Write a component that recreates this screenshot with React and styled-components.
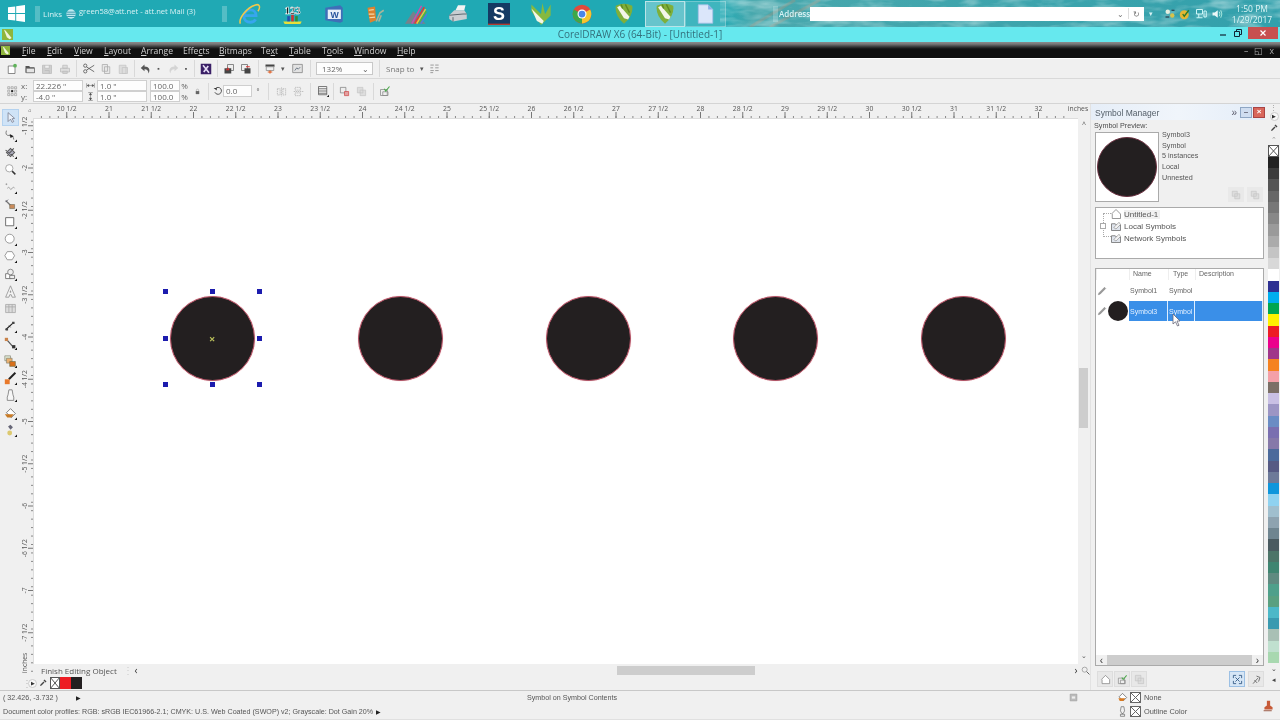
import React from 'react';
import styled, { createGlobalStyle } from 'styled-components';

const UI_FONT = '"Open Sans", "Noto Sans", "Liberation Sans", sans-serif';
const SMALL_FONT = '"Liberation Sans", Arial, sans-serif';

const GlobalStyle = createGlobalStyle`
  html, body { margin: 0; padding: 0; background: #fff; overflow: hidden; }
  * { box-sizing: border-box; }
`;

const Screen = styled.div`
  width: 1280px;
  height: 720px;
  display: flex;
  flex-direction: column;
  overflow: hidden;
  font-family: ${UI_FONT};
  font-size: 8.5px;
  color: #4c4c4c;
  background: #f0f0f0;
  filter: blur(0.3px);
`;

/* ---------- taskbar ---------- */
const Taskbar = styled.div`
  position: relative;
  height: 27px;
  flex: none;
  display: flex;
  align-items: center;
  background: #20a9b4;
  color: #d8f2f4;
  overflow: hidden;
`;
const Wallpaper = styled.svg`
  position: absolute;
  left: 720px;
  top: 0;
`;
const Slot = styled.div`
  position: relative;
  flex: none;
  width: ${(p) => p.$w}px;
  height: ${(p) => p.$h || 27}px;
  display: flex;
  align-items: center;
  justify-content: ${(p) => p.$justify || 'center'};
  margin-top: ${(p) => p.$mt || 0}px;
`;
const ActiveSlot = styled(Slot)`
  height: 26px;
  background: ${(p) => (p.$strong ? 'rgba(255,255,255,.32)' : 'rgba(255,255,255,.14)')};
  border: 1px solid rgba(255,255,255,${(p) => (p.$strong ? '.55' : '.25')});
`;
const Grip = styled.div`
  position: relative;
  flex: none;
  width: 5px;
  height: 16px;
  margin: ${(p) => p.$m};
  background-image: radial-gradient(rgba(255,255,255,.5) 0.6px, transparent 0.8px);
  background-size: 2px 2px;
`;
const BarText = styled.span`
  position: relative;
  flex: none;
  font-size: ${(p) => p.$size || 9}px;
  font-weight: ${(p) => p.$weight || 400};
  width: ${(p) => (p.$w ? `${p.$w}px` : 'auto')};
  white-space: nowrap;
  margin: ${(p) => p.$m || 0};
`;
const AddressBox = styled.div`
  position: relative;
  flex: none;
  width: 334px;
  height: 14px;
  margin-left: 3px;
  background: #fff;
  display: flex;
  align-items: center;
  justify-content: flex-end;
  color: #777;
  font-size: 8px;
`;
const AddressBtn = styled.span`
  width: 16px;
  text-align: center;
  border-left: ${(p) => (p.$line ? '1px solid #ddd' : 'none')};
`;
const Clock = styled.div`
  position: relative;
  flex: none;
  width: 44px;
  margin-left: 5px;
  text-align: center;
  font-size: 8.5px;
  line-height: 11px;
  color: #dff6f6;
`;

/* ---------- title and menu ---------- */
const TitleBar = styled.div`
  position: relative;
  height: 15px;
  flex: none;
  background: #66e8ee;
  display: flex;
  align-items: center;
  justify-content: center;
  padding-bottom: 1px;
  color: #33707c;
  font-size: 10px;
`;
const TitleLogo = styled.div`
  position: absolute;
  left: 2px;
  top: 2px;
`;
const WinButtons = styled.div`
  position: absolute;
  right: 2px;
  top: 0;
  height: 12px;
  display: flex;
  align-items: center;
`;
const WinBtn = styled.div`
  width: ${(p) => p.$w}px;
  height: 12px;
  margin-left: ${(p) => p.$ml || 0}px;
  display: flex;
  align-items: center;
  justify-content: center;
  background: ${(p) => p.$bg || 'transparent'};
`;
const MenuBar = styled.div`
  height: 17px;
  flex: none;
  display: flex;
  align-items: center;
  padding-left: 1px;
  background: linear-gradient(#8b8b8b 0, #777 2px, #333 5px, #111 7px, #111 100%);
  color: #cfcfcf;
  font-size: 8.6px;
  border-bottom: 1px solid #fff;
`;
const MenuItem = styled.span`
  flex: none;
  width: ${(p) => p.$w}px;
  margin-top: 1px;
  u { text-decoration-thickness: 1px; text-underline-offset: 1px; }
`;
const MenuTail = styled.div`
  margin-left: auto;
  margin-right: 6px;
  width: 30px;
  padding-top: 1px;
  display: flex;
  justify-content: space-between;
  color: #aaa;
`;

/* ---------- standard toolbar ---------- */
const Toolbar = styled.div`
  height: 20px;
  flex: none;
  display: flex;
  align-items: center;
  padding-left: 3px;
  background: #f0f0f0;
  border-bottom: 1px solid #d9d9d9;
`;
const PropertyBar = styled(Toolbar)`
  height: 25px;
  padding-left: 4px;
  border-bottom: 1px solid #d4d4d4;
`;
const Tool = styled.div`
  flex: none;
  width: ${(p) => p.$w || 17}px;
  height: 16px;
  display: flex;
  align-items: center;
  justify-content: center;
`;
const Sep = styled.div`
  flex: none;
  width: 1px;
  height: 17px;
  margin: 0 ${(p) => p.$m || 4}px;
  background: #d9d9d9;
`;
const Drop = styled.span`
  flex: none;
  width: ${(p) => p.$w || 12}px;
  text-align: center;
  font-size: 7px;
  color: #555;
`;
const ZoomBox = styled.div`
  flex: none;
  width: 57px;
  height: 13px;
  padding: 0 3px 0 5px;
  border: 1px solid #c8c8c8;
  background: #fdfdfd;
  display: flex;
  align-items: center;
  justify-content: space-between;
  font-size: 8px;
  color: #666;
`;
const ToolText = styled.span`
  flex: none;
  width: ${(p) => p.$w}px;
  font-size: 8px;
  color: #777;
`;
const FieldStack = styled.div`
  flex: none;
  width: ${(p) => p.$w}px;
  display: flex;
  flex-direction: column;
  margin-left: ${(p) => p.$ml || 0}px;
`;
const Field = styled.div`
  height: ${(p) => p.$h || 11}px;
  width: ${(p) => (p.$w ? `${p.$w}px` : 'auto')};
  flex: none;
  background: #fdfdfd;
  border: 1px solid #cfcfcf;
  display: flex;
  align-items: center;
  padding-left: 2px;
  font-size: 8px;
  line-height: 1;
  color: #666;
`;
const LabelStack = styled.div`
  flex: none;
  width: ${(p) => p.$w}px;
  display: flex;
  flex-direction: column;
  align-items: ${(p) => p.$align || 'center'};
  font-size: 8px;
  line-height: 11px;
  color: #666;
`;
const ArrowGap = styled.span`
  height: 2px;
`;

/* ---------- workspace ---------- */
const Main = styled.div`
  flex: 1;
  min-height: 0;
  display: flex;
`;
const Toolbox = styled.div`
  flex: none;
  width: 20px;
  padding: 5px 0 0 2px;
  display: flex;
  flex-direction: column;
  align-items: flex-start;
`;
const BoxTool = styled.div`
  flex: none;
  width: 17px;
  height: 17.4px;
  display: flex;
  align-items: center;
  justify-content: center;
  background: ${(p) => (p.$active ? '#cfe3f7' : 'transparent')};
  border: 1px solid ${(p) => (p.$active ? '#b4d2ef' : 'transparent')};
`;
const Center = styled.div`
  flex: none;
  width: 1070px;
  display: flex;
  flex-direction: column;
`;
const RulerTop = styled.svg`
  flex: none;
  display: block;
  position: relative;
  z-index: 1;
  overflow: visible;
`;
const WorkRow = styled.div`
  height: 546px;
  flex: none;
  display: flex;
`;
const Canvas = styled.div`
  flex: 1;
  background: #fff;
  padding: 177px 0 0 136px;
  display: flex;
  align-items: flex-start;
  gap: 102.75px;
  border-left: 1px solid #ddd;
  border-top: 1px solid #ddd;
`;
const Disc = styled.div`
  position: relative;
  flex: none;
  width: 85px;
  height: 85px;
  border-radius: 50%;
  background: #231f20;
  border: 1px solid #b85468;
  box-shadow: 0 0 1px #e7a0a8;
`;
const Handle = styled.div`
  position: absolute;
  width: 5px;
  height: 5px;
  left: ${(p) => p.$x}px;
  top: ${(p) => p.$y}px;
  background: #1c1cae;
`;
const CenterMark = styled.div`
  position: absolute;
  left: 38px;
  top: 36px;
  font-size: 11px;
  line-height: 11px;
  font-weight: 700;
  color: #b8bd5a;
`;
const VScroll = styled.div`
  flex: none;
  width: 12px;
  position: relative;
  background: #f0f0f0;
  display: flex;
  flex-direction: column;
  align-items: center;
  justify-content: space-between;
  padding: 2px 0 4px;
  color: #555;
  font-size: 7px;
`;
const VThumb = styled.div`
  position: absolute;
  top: 250px;
  left: 1px;
  width: 9px;
  height: 60px;
  background: #cdcdcd;
`;
const StripRow = styled.div`
  height: 12px;
  flex: none;
  display: flex;
  align-items: center;
  background: #f0f0f0;
`;
const PageTab = styled.span`
  flex: none;
  width: 103px;
  padding-left: 21px;
  font-size: 8px;
  color: #555;
  white-space: nowrap;
`;
const HTrack = styled.div`
  flex: none;
  width: 933px;
  height: 9px;
  padding-left: 478px;
  display: flex;
`;
const HThumb = styled.div`
  width: 138px;
  height: 9px;
  background: #cdcdcd;
`;
const Chevron = styled.span`
  flex: none;
  width: ${(p) => p.$w || 10}px;
  text-align: center;
  font-size: 10px;
  line-height: 9px;
  color: ${(p) => p.$c || '#333'};
`;
const SwatchRow = styled.div`
  height: 14px;
  flex: none;
  display: flex;
  align-items: center;
  padding-left: 2px;
`;
const PlayDot = styled.span`
  flex: none;
  width: 9px;
  height: 9px;
  margin-right: -1px;
  border: 1px solid #ccc;
  border-radius: 50%;
  background: #f8f8f8;
  font-size: 5px;
  line-height: 7px;
  text-align: center;
  color: #333;
`;
const Swatch = styled.div`
  flex: none;
  width: ${(p) => p.$w || 11}px;
  height: 12px;
  background: ${(p) => p.$c};
`;

/* ---------- docker ---------- */
const Docker = styled.div`
  flex: none;
  width: 175px;
  display: flex;
  flex-direction: column;
  border-left: 1px solid #e2e2e2;
  font-family: ${SMALL_FONT};
`;
const DockHead = styled.div`
  height: 16px;
  flex: none;
  display: flex;
  align-items: center;
  padding: 1px 0 0 4px;
  background: linear-gradient(90deg, #e6eef8, #f0f5fb 50%, #e4edf8);
  font-size: 8.5px;
  color: #55606a;
`;
const DockChevrons = styled.span`
  margin-left: auto;
  margin-right: 2px;
  color: #556;
  font-size: 10px;
`;
const DockBtn = styled.div`
  width: 12px;
  height: 11px;
  margin-left: 1px;
  border: 1px solid ${(p) => (p.$close ? '#a44' : '#8ea6c4')};
  background: ${(p) => (p.$close ? '#d8675c' : '#cfddf0')};
  color: ${(p) => (p.$close ? '#fff' : '#556')};
  font-size: 8px;
  line-height: 8px;
  text-align: center;
  font-weight: 700;
`;
const DockLabel = styled.div`
  height: 12px;
  flex: none;
  padding: 1px 0 0 3px;
  font-size: 7.2px;
  line-height: 10px;
`;
const PreviewRow = styled.div`
  height: 70px;
  flex: none;
  display: flex;
  padding-left: 4px;
  gap: 3px;
`;
const PreviewBox = styled.div`
  flex: none;
  width: 64px;
  height: 70px;
  background: #fff;
  border: 1px solid #aaa;
  display: flex;
  align-items: center;
  justify-content: center;
`;
const PreviewDisc = styled.div`
  width: 60px;
  height: 60px;
  border-radius: 50%;
  background: #231f20;
  border: 1px solid #6a3040;
`;
const MetaColumn = styled.div`
  flex: 1;
  position: relative;
  margin-top: -2px;
  font-size: 7.2px;
  line-height: 10.7px;
  color: #555;
`;
const MetaButtons = styled.div`
  position: absolute;
  right: 2px;
  bottom: 0;
  display: flex;
  gap: 3px;
`;
const MetaBtn = styled.div`
  width: 16px;
  height: 15px;
  background: #e9e9e9;
  display: flex;
  align-items: center;
  justify-content: center;
`;
const TreeBox = styled.div`
  position: relative;
  height: 52px;
  flex: none;
  margin: 5px 1px 9px 4px;
  background: #fff;
  border: 1px solid #aaa;
`;
const TreeLines = styled.div`
  position: absolute;
  left: 7px;
  top: 5px;
  width: 8px;
  height: 24px;
  border-left: 1px dotted #aaa;
  border-bottom: 1px dotted #aaa;
  border-top: 1px dotted #aaa;
`;
const TreeRow = styled.div`
  position: relative;
  height: 12px;
  display: flex;
  align-items: center;
  padding-left: ${(p) => p.$pad || 14}px;
  font-size: 8px;
  color: #555;
  white-space: nowrap;
`;
const TreePlus = styled.span`
  flex: none;
  width: 6px;
  height: 6px;
  margin-right: 4px;
  background: #fff;
  border: 1px solid #aaa;
`;
const TreeName = styled.span`
  margin-left: 2px;
  background: ${(p) => (p.$sel ? '#f0f0f0' : 'transparent')};
  padding-right: 2px;
`;
const ListBox = styled.div`
  position: relative;
  flex: 1;
  min-height: 0;
  margin: 0 1px 0 4px;
  background: #fff;
  border: 1px solid #aaa;
  display: flex;
  flex-direction: column;
`;
const ListGrid = styled.div`
  display: grid;
  grid-template-columns: 33px 39px 27px 1fr;
  grid-template-rows: ${(p) => p.$h}px;
  align-items: center;
  font-size: 7px;
  flex: none;
  color: ${(p) => (p.$sel ? '#e4f0ff' : '#666')};
`;
const ListHeadCell = styled.span`
  padding-left: ${(p) => p.$pad || 4}px;
  border-left: 1px solid #eee;
  white-space: nowrap;
  height: 100%;
  line-height: 10px;
`;
const ThumbCell = styled.div`
  height: 100%;
  padding-left: 1px;
  display: flex;
  align-items: center;
  gap: 1px;
`;
const Thumb = styled.div`
  width: 20px;
  height: 20px;
  border-radius: 50%;
  background: #231f20;
`;
const ListCell = styled.div`
  height: 100%;
  display: flex;
  align-items: center;
  padding-left: 1px;
  white-space: nowrap;
  background: ${(p) => (p.$sel ? '#3a8fe8' : 'transparent')};
  border-right: 1px solid ${(p) => (p.$sel ? '#ddeeff' : 'transparent')};
`;
const Pointer = styled.svg`
  position: absolute;
  left: 76px;
  top: 44px;
`;
const ListScroll = styled.div`
  margin-top: auto;
  height: 10px;
  flex: none;
  display: flex;
  align-items: center;
  background: #f0f0f0;
`;
const ListThumb = styled.div`
  flex: 1;
  height: 10px;
  background: #cdcdcd;
`;
const DockFoot = styled.div`
  height: 24px;
  flex: none;
  display: flex;
  align-items: center;
  padding: 2px 0 0 6px;
  gap: 1px;
`;
const FootBtn = styled.div`
  flex: none;
  width: 16px;
  height: 16px;
  margin-left: ${(p) => p.$ml || 0}px;
  background: ${(p) => (p.$on ? '#d6e6f6' : '#e8e8e8')};
  border: 1px solid ${(p) => (p.$on ? '#9cc0e4' : '#ddd')};
  display: flex;
  align-items: center;
  justify-content: center;
`;

/* ---------- palette ---------- */
const Palette = styled.div`
  flex: none;
  width: 15px;
  padding-left: 3px;
  display: flex;
  flex-direction: column;
`;
const PaletteTop = styled.div`
  height: 41px;
  flex: none;
  display: flex;
  flex-direction: column;
  align-items: center;
  width: 11px;
  color: #999;
  font-size: 7px;
  line-height: 8px;
`;
const PaletteTick = styled.span`
  height: ${(p) => p.$h}px;
  display: flex;
  align-items: center;
  justify-content: center;
`;
const Chip = styled.div`
  width: 11px;
  height: ${(p) => p.$h || 11.25}px;
  flex: none;
  background: ${(p) => p.$c};
`;
const NoneChip = styled.svg`
  flex: none;
  display: block;
`;
const PaletteFoot = styled.div`
  width: 11px;
  text-align: center;
  font-size: 7px;
  line-height: 11px;
  color: #444;
`;

/* ---------- status ---------- */
const StatusBar = styled.div`
  height: 30px;
  flex: none;
  display: grid;
  grid-template-columns: 527px 541px 47px 147px 1fr;
  grid-template-rows: 13px 15px;
  border-top: 1px solid #c8c8c8;
  border-bottom: 1px solid #e0e0e0;
  font-family: ${SMALL_FONT};
  font-size: 7.15px;
  color: #555;
`;
const StatusCell = styled.div`
  display: flex;
  align-items: center;
  white-space: nowrap;
  gap: ${(p) => p.$gap || 0}px;
  padding-left: ${(p) => p.$pad || 0}px;
  grid-column: ${(p) => p.$col || 'auto'};
  grid-row: ${(p) => p.$row || 'auto'};
`;
const StatusArrow = styled.span`
  margin-left: ${(p) => p.$ml}px;
  font-size: 6px;
  color: #222;
`;
const StateName = styled.span`
  margin-left: 1px;
  font-size: 7.4px;
`;

/* ---------- drawings ---------- */
const Svg = ({ s = 14, h, vb = '0 0 16 16', children }) => (
  <svg width={s} height={h || s} viewBox={vb} style={{ display: 'block' }}>{children}</svg>
);

const CorelPen = ({ s = 20, c = '#8fb83f' }) => (
  <Svg s={s}>
    <path d="M2 2Q8-1 14 2 15 9 8 15 1 9 2 2Z" fill={c} />
    <path d="M3 3 5 2 12 10 11 12 8 11Z" fill="#f4f6e8" />
    <path d="M9 1 12 7M6 1l1 3" stroke="#5e8a22" strokeWidth="1" fill="none" />
  </Svg>
);
const CornerMark = () => <path d="M13 16l3-3v3Z" fill="#111" />;

const Taskicons = {
  windows: (
    <Svg s={17}>
      <path d="M0 2.2 6.8 1.3V7.6H0ZM7.7 1.2 16 0V7.6H7.7ZM0 8.4H6.8V14.7L0 13.8ZM7.7 8.4H16V16L7.7 14.8Z" fill="#fff" />
    </Svg>
  ),
  att: (
    <Svg s={10}>
      <circle cx="8" cy="8" r="7.5" fill="#bfeaf0" />
      <path d="M1 5h14M.5 8.5h15M2 12h12" stroke="#2b8fa6" strokeWidth="1.4" />
    </Svg>
  ),
  ie: (
    <Svg s={22}>
      <path d="M3.8 9.2H12.4C12.4 6.6 10.6 5 8.2 5 5.5 5 3.6 7.2 3.6 9.8S5.5 14 8.2 14c1.8 0 3.2-.8 3.9-2.1" fill="none" stroke="#37a6ee" strokeWidth="2.1" />
      <path d="M1 15C-.5 12 5 3.5 12 1.400 15 .5 15.800 3 13.800 6" fill="none" stroke="#f2c84a" strokeWidth="1.100" />
    </Svg>
  ),
  numbers: (
    <Svg s={21}>
      <path d="M1 14h14l-1 2H2Z" fill="#e8e038" />
      <path d="M4 10h2v4H4Z" fill="#2350b0" /><path d="M7 9h2v5H7Z" fill="#c33" /><path d="M10 10h2v4h-2Z" fill="#2c8c3a" />
      <text x="8" y="8" textAnchor="middle" fontSize="8" fontWeight="700" fill="#111" stroke="#fff" strokeWidth=".4" fontFamily="Liberation Serif">123</text>
    </Svg>
  ),
  word: (
    <Svg s={20}>
      <path d="M1 3 13 1l2 2V14L13 15 1 13Z" fill="#3f6fb8" />
      <path d="M3 4.500H13.500V12H3Z" fill="#e8f0fa" />
      <text x="8.500" y="11" textAnchor="middle" fontSize="7" fontWeight="700" fill="#27549c" fontFamily="Liberation Sans">W</text>
    </Svg>
  ),
  film: (
    <Svg s={20}>
      <path d="M2 3 8 2 9 13 4 15Z" fill="#d9822f" />
      <path d="M3 5 7 4.500M3 8h4.500M3.500 11 8 10.500" stroke="#f4d9a8" strokeWidth="1" />
      <path d="M9 14 12 7 15 5M11 14 13 9" stroke="#a9b59a" strokeWidth="1.300" fill="none" />
    </Svg>
  ),
  rainbow: (
    <Svg s={22}>
      <path d="M0 15 6 6 9 9 15 15Z" fill="#77818b" />
      <path d="M7 15 14 3" stroke="#e33" strokeWidth="1.100" /><path d="M8.500 15 15 4.500" stroke="#f3c531" strokeWidth="1.100" />
      <path d="M10 15 15.500 6" stroke="#4fb04a" strokeWidth="1.100" /><path d="M11.500 15 16 8" stroke="#4a7fe0" strokeWidth="1.100" />
      <path d="M5 15 12 2" stroke="#c94fb0" strokeWidth="1.100" />
    </Svg>
  ),
  printer: (
    <Svg s={20}>
      <path d="M1 9 5 5h8l2 3v4l-11 2-3-2Z" fill="#c9ced2" />
      <path d="M6 5 8 1h6l-1 4Z" fill="#f3f3f3" />
      <path d="M1 9 12 8 15 8M4 14V10.500" stroke="#5d6a72" strokeWidth=".8" fill="none" />
    </Svg>
  ),
  snagit: (
    <Svg s={22}>
      <path d="M0 0H16V16H0Z" fill="#143a63" />
      <path d="M0 15H16V16H0Z" fill="#b23a30" />
      <text x="8" y="12.500" textAnchor="middle" fontSize="13" fontWeight="700" fill="#fff" fontFamily="Liberation Sans">S</text>
    </Svg>
  ),
  fan: (
    <Svg s={22}>
      <path d="M1 1 8 8 9 0 11 8 15 1 15 9 8 16 1 6Z" fill="#86b93f" />
      <path d="M1 4 10 13 9 15 5 13Z" fill="#f4f6e8" />
    </Svg>
  ),
  chrome: (
    <Svg s={20}>
      <circle cx="8" cy="8" r="7.500" fill="#e04a3c" />
      <path d="M8 8 14.500 4.300A7.500 7.500 0 0 1 8 15.500Z" fill="#f5c62e" />
      <path d="M8 8 8 15.500A7.500 7.500 0 0 1 1.500 4.300Z" fill="#3da84a" />
      <circle cx="8" cy="8" r="3.600" fill="#fff" /><circle cx="8" cy="8" r="2.700" fill="#4a86e8" />
    </Svg>
  ),
  page: (
    <Svg s={21} h={22}>
      <path d="M2.500 1H10L13.500 4.500V15H2.500Z" fill="#dbe6fa" stroke="#a8bfe8" strokeWidth=".6" />
      <path d="M10 1V4.500H13.500Z" fill="#8fb0e6" />
    </Svg>
  ),
};

const TrayIcon = ({ kind }) => (
  <Svg s={12}>
    {kind === 'people' && <><circle cx="5" cy="5" r="3" fill="#e6efe0" /><circle cx="11" cy="10" r="3" fill="#d8c24a" /><path d="M2 12h5M10 3h4" stroke="#223" strokeWidth="1.500" /></>}
    {kind === 'check' && <><circle cx="7" cy="9" r="6" fill="#e4b733" /><path d="M5 8l2 3 6-8" stroke="#2a7a2a" strokeWidth="1.800" fill="none" /></>}
    {kind === 'net' && <path d="M2 2h8v6H2ZM12 4h3v8h-3ZM5 8v5H2M5 13h5" stroke="#dff" strokeWidth="1.200" fill="none" />}
    {kind === 'sound' && <><path d="M2 6h3l4-3v10L5 10H2Z" fill="#eaf8f8" /><path d="M11 5q2 3 0 6M13 3q3 5 0 10" stroke="#cfe" fill="none" /></>}
  </Svg>
);

const ToolGlyphs = {
  newDoc: <><path d="M3 4h9v10H3Z" fill="#fff" stroke="#666" /><circle cx="12" cy="3.500" r="2.500" fill="#5fb35a" /></>,
  open: <><path d="M2 4h5l1 1.500h6V13H2Z" fill="#555" /><path d="M3 7h11v6H3Z" fill="#e4e4e4" stroke="#555" strokeWidth=".8" /></>,
  save: <path d="M2 3h12v11H2ZM5 3v4h6V3M5 10h6v4" fill="#cfcfcf" stroke="#bbb" />,
  print: <path d="M5 3h6v4H5ZM2 7h12v5H2ZM5 11h6v3H5Z" fill="#ddd" stroke="#bbb" />,
  cut: <><circle cx="4" cy="4.500" r="2" fill="none" stroke="#555" /><circle cx="4" cy="11.500" r="2" fill="none" stroke="#555" /><path d="M5.500 6 15 12M5.500 10 15 4" stroke="#555" /></>,
  copy: <path d="M3 2h7v9H3ZM6 5h7v9H6Z" fill="#e8e8e8" stroke="#aaa" />,
  paste: <path d="M3 3h9v11H3ZM7 6h7v8H7Z" fill="#ddd" stroke="#c4c4c4" />,
  undo: <path d="M6 2 1 6.500 6 11V8.200C9 8 11 9.500 11.500 14 14 9 12 4.800 6 4.800Z" fill="#555" />,
  redo: <path d="M10 2 15 6.500 10 11V8.200C7 8 5 9.500 4.500 14 2 9 4 4.800 10 4.800Z" fill="#d4d4d4" />,
  connect: <><path d="M1 1h14v14H1Z" fill="#3a1f66" /><path d="M4 3 12 13M11 4 5 12" stroke="#e4dcf4" strokeWidth="2.200" /></>,
  imp: <><path d="M6 2h8v8H6Z" fill="#eee" stroke="#666" /><path d="M2 7h9v7H2Z" fill="#444" /><path d="M4 9h4M8 9 6 6" stroke="#d33" strokeWidth="1.400" /></>,
  exp: <><path d="M2 2h8v8H2Z" fill="#eee" stroke="#666" /><path d="M6 7h8v7H6Z" fill="#444" /><path d="M8 5h5" stroke="#d33" strokeWidth="1.400" /></>,
  publish: <><path d="M2 2h12v3H2Z" fill="#444" /><path d="M3 5h10v5H3Z" fill="#eee" stroke="#888" /><path d="M8 10v4M5 12h6" stroke="#e05b20" strokeWidth="1.600" /></>,
  pdf: <><path d="M1 2h14v12H1Z" fill="#e2e2e2" stroke="#777" /><path d="M4 11l3-4 2 2 3-3" stroke="#456" fill="none" /></>,
  options: <path d="M2 3h5M2 7h4M2 11h5M2 14h4M9 3h5M9 7h5M9 11h5" stroke="#777" />,
  gridDots: <><path d="M1 1h3v3H1ZM6 1h3v3H6ZM11 1h3v3h-3ZM1 6h3v3H1ZM11 6h3v3h-3ZM1 11h3v3H1ZM6 11h3v3H6ZM11 11h3v3h-3Z" fill="none" stroke="#888" strokeWidth=".8" /><path d="M6 6h3v3H6Z" fill="#222" /></>,
  widthArrow: <path d="M1 4v8M15 4v8M2 8h12M2 8l3-2v4ZM14 8l-3-2v4Z" stroke="#555" fill="#555" strokeWidth=".8" />,
  heightArrow: <path d="M4 1h8M4 15h8M8 2v12M8 2 6 5h4ZM8 14l-2-3h4Z" stroke="#444" fill="#444" strokeWidth=".8" />,
  lock: <><path d="M4 7h8v7H4Z" fill="#666" /><path d="M5.500 7V5a2.500 2.500 0 0 1 5 0v2" stroke="#888" fill="none" /></>,
  rotate: <><path d="M4 4a5.500 5.500 0 1 1-1 6" stroke="#333" fill="none" strokeWidth="1.300" /><path d="M1 3h5v4Z" fill="#333" /></>,
  flipH: <path d="M2 4h4v9H2ZM10 4h4v9h-4ZM8 2v13" stroke="#aaa" fill="none" strokeDasharray="2 1" />,
  flipV: <path d="M3 2h8v4H3ZM3 10h8v4H3ZM1 8h14" stroke="#aaa" fill="none" strokeDasharray="2 1" />,
  order: <><path d="M2 2h11v11H2Z" fill="none" stroke="#555" /><path d="M2 5h11M2 8h11M2 11h11" stroke="#555" /><CornerMark /></>,
  combine: <><path d="M2 2h8v8H2Z" fill="#eee" stroke="#777" /><path d="M8 8h6v6H8Z" fill="#e4a0a0" stroke="#c44" /></>,
  breakApart: <path d="M2 2h8v8H2ZM6 6h8v8H6Z" fill="#ddd" stroke="#c4c4c4" />,
  editOk: <><path d="M2 6h9v8H2Z" fill="#eee" stroke="#888" /><path d="M5 9h7v5H5Z" fill="none" stroke="#888" /><path d="M7 5l2 3 5-6" stroke="#4aa84a" strokeWidth="1.500" fill="none" /></>,
  pencil: <path d="M2 14 3 11 12 2 14 4 5 13Z" fill="#999" stroke="#777" strokeWidth=".6" />,
  house: <path d="M2 8 8 2l6 6v6H3V8" fill="#fff" stroke="#777" />,
  folderSym: <><path d="M2 5h5l1 1.500h6V14H2Z" fill="#dfe4ec" stroke="#666" /><path d="M5 10 12 3 14 6 8 12Z" fill="#f3f3f3" stroke="#777" strokeWidth=".7" /></>,
  fit: <path d="M2 2h4M2 2v4M14 2h-4M14 2v4M2 14h4M2 14v-4M14 14h-4M14 14v-4M5 5l6 6M11 5l-6 6" stroke="#28507c" strokeWidth="1.200" fill="none" />,
  wand: <path d="M3 14 10 6M8 3l5 2-2 6M5 9l4 4" stroke="#666" fill="none" strokeWidth="1.300" />,
  magnifier: <><circle cx="6.500" cy="6.500" r="4.500" fill="none" stroke="#777" /><path d="M10 10l5 5" stroke="#555" strokeWidth="1.600" /></>,
  bucket: <><path d="M3 7 8 2 14 8 9 13Z" fill="#fff" stroke="#555" /><path d="M2 9h10l-3 4H4Z" fill="#d87a20" /></>,
  nib: <path d="M6 1h4l1 6-2 4H7L5 7ZM5 12h6v3H5Z" fill="#f0f0f0" stroke="#666" />,
  stamp: <><path d="M6 2h4v6l3 2v3H3v-3l3-2Z" fill="#c65a38" /><path d="M2 14h10v1H2Z" fill="#8a3a20" /></>,
  dropper: <path d="M2 14 3 11 9 5 11 7 5 13ZM9 3l2-2 4 4-2 2Z" fill="#444" />,
  statusPrinter: <><path d="M2 2h12v12H2Z" fill="#bbb" stroke="#999" /><path d="M5 6h6v4H5Z" fill="#eee" /></>,
};
const Glyph = ({ name, s = 14 }) => <Svg s={s}>{ToolGlyphs[name]}</Svg>;

const BoxGlyphs = [
  <path d="M5 2V13L8 10 10 14 12 13 10 9.500 13 9Z" fill="#e8f0fa" stroke="#667" strokeWidth=".8" />,
  <><path d="M3 2q-2 6 3 6 6 0 6 5" fill="none" stroke="#666" /><path d="M7 6l5 3-4 2Z" fill="#222" /><CornerMark /></>,
  <><path d="M3 8l5-5 5 5-5 5ZM2 5l10 8M12 3 4 12" stroke="#555" strokeWidth="1.300" fill="#aab" /><CornerMark /></>,
  <><circle cx="6.500" cy="6.500" r="4.500" fill="#fff" stroke="#999" /><path d="M10 10l4 4" stroke="#333" strokeWidth="1.800" /></>,
  <><path d="M2 4h2M3 3v2M4 9q2-3 3 0t3 0 3 0" stroke="#999" fill="none" strokeWidth="1.100" /><CornerMark /></>,
  <><path d="M2 3l9 9" stroke="#777" strokeWidth="1.600" /><path d="M7 8h6v5H7Z" fill="#c98a5a" stroke="#665" strokeWidth=".7" /><path d="M2 5l3-3" stroke="#556" /><CornerMark /></>,
  <><path d="M2 2h10v10H2Z" fill="#fff" stroke="#555" /><CornerMark /></>,
  <><circle cx="7" cy="7" r="5.500" fill="#fff" stroke="#888" /><CornerMark /></>,
  <><path d="M4 2h6l3 5-3 5H4L1 7Z" fill="#fff" stroke="#888" /><CornerMark /></>,
  <><path d="M2 7h7v6H2Z" fill="#fff" stroke="#666" /><circle cx="8" cy="5" r="3.500" fill="#eee" stroke="#777" /><path d="M7 9h6v4H7Z" fill="#eee" stroke="#666" /><CornerMark /></>,
  <path d="M8 1 14 15H10L9 12H7L6 15H2ZM7.500 9H8.500L8 7Z" fill="#f4f4f4" stroke="#888" strokeWidth=".9" />,
  <path d="M2 3h12v10H2ZM2 6h12M6 3v10M10 3v10" fill="#ddd" stroke="#aaa" />,
  <><path d="M2 12 12 3" stroke="#222" strokeWidth="1.400" /><path d="M2 10h3v3H2ZM10 2h3v3h-3Z" fill="#444" /><path d="M6 7l2 2" stroke="#222" /><CornerMark /></>,
  <><path d="M3 3l9 10" stroke="#555" strokeWidth="1.500" /><path d="M1 1h4v4H1Z" fill="#c9824a" /><path d="M10 10h4v4h-4Z" fill="#333" /><CornerMark /></>,
  <><path d="M1 1h7v6H1Z" fill="#dfe8d4" stroke="#776" strokeWidth=".7" /><path d="M3 4h7v6H3Z" fill="#eab070" stroke="#776" strokeWidth=".7" /><path d="M7 8h7v6H7Z" fill="#d8701c" stroke="#664" strokeWidth=".7" /><CornerMark /></>,
  <><path d="M14 1 6 9" stroke="#222" strokeWidth="2.400" /><path d="M1 9h6v6H1Z" fill="#e8782a" /><CornerMark /></>,
  <><path d="M6 1h4l1 6 1 3v4H4v-4l1-3Z" fill="#f6f6f6" stroke="#777" /><CornerMark /></>,
  <><path d="M3 7 8 2 14 8 9 13Z" fill="#fff" stroke="#666" /><path d="M1 9h11l-3 4H4Z" fill="#c87a24" /><CornerMark /></>,
  <><path d="M5 3 8 1 11 4 8 7Z" fill="#667" /><circle cx="7" cy="11" r="3" fill="#dcc970" /><CornerMark /></>,
];

const NoneBox = ({ w = 11, h = 12, stroke = '#555' }) => (
  <NoneChip width={w} height={h} viewBox={`0 0 ${w} ${h}`}>
    <rect x=".5" y=".5" width={w - 1} height={h - 1} fill="#fff" stroke={stroke} />
    <path d={`M0 0L${w} ${h}M${w} 0L0 ${h}`} stroke={stroke} />
  </NoneChip>
);

const tx = (n) => 89 + (n - 21) * 84.5;
const rulerNums = Array.from({ length: 24 }, (_, i) => 20.5 + i / 2);
const minorTicks = Array.from({ length: 130 }, (_, i) => 4.5 + i * 8.45);

const HorizontalRuler = () => (
  <RulerTop width="1070" height="14" viewBox="0 0 1070 14">
    <path d="M8 7h4M10 5v4" stroke="#999" strokeDasharray="1 1" />
    {minorTicks.filter((x) => x > 14 && x < 1050).map((x) => <path key={x} d={`M${x} 12V14`} stroke="#888" />)}
    {rulerNums.map((n) => {
      const whole = Math.floor(n);
      return (
        <g key={n}>
          <path d={`M${tx(n)} 8V14`} stroke="#777" />
          <text x={tx(n)} y="7" textAnchor="middle" fontSize="6.8" fill="#555" fontFamily="Open Sans">
            {n === whole ? whole : `${whole}  1/2`}
          </text>
        </g>
      );
    })}
    <text x="1058" y="7" textAnchor="middle" fontSize="6.800" fill="#555" fontFamily="Open Sans">inches</text>
  </RulerTop>
);

const vy = (i) => 50 + i * 42.25;
const vLabels = [1.5, 2, 2.5, 3, 3.5, 4, 4.5, 5, 5.5, 6, 6.5, 7, 7.5, 8, 8.5, 9, 9.500, 10, 10.5, 11, 11.5, 12, 12.5, 13];
const VerticalRuler = () => (
  <RulerTop width="13" height="546" viewBox="0 0 13 546">
    {Array.from({ length: 66 }, (_, i) => 4 + i * 8.45).map((y) => <path key={y} d={`M11 ${y}H13`} stroke="#888" />)}
    {vLabels.map((n, i) => {
      const y = vy(i - 1);
      if (y > 515) return null;
      const whole = Math.floor(n);
      return (
        <g key={n}>
          <path d={`M8 ${y}H13`} stroke="#777" />
          <text transform={`rotate(-90 7 ${y})`} x="7" y={y} textAnchor="middle" fontSize="6.800" fill="#555" fontFamily="Open Sans">
            {n === whole ? `-${whole}` : `-${whole}  1/2`}
          </text>
        </g>
      );
    })}
    <text transform="rotate(-90 7 555)" x="7" y="555" fontSize="6.800" fill="#555" fontFamily="Open Sans">inches</text>
  </RulerTop>
);

const paletteColors = [
  '#3c3c3c', '#555', '#676767', '#777', '#888', '#9a9a9a', '#ababab', '#c4c4c4', '#d8d8d8', '#fff',
  '#2e3192', '#00aeef', '#00a651', '#fff200', '#ed1c24', '#ec008c', '#a0368a', '#f58220', '#f4a0a8', '#7b6f66',
  '#c9c0e4', '#9c95c4', '#6a8cc4', '#7a6fb0', '#8679a9', '#4b6a9b', '#565a84', '#6d7a99',
  '#0e96dc', '#8fd2f0', '#a0bfce', '#8ea3b0', '#6f8590', '#4a5a60',
  '#4d7468', '#3f8571', '#5f8a80', '#4fa08b', '#5aa080', '#4cb8c8', '#3a9ab0', '#a9c0b5', '#c0e0cf', '#a8d8b0',
];

const menus = [
  [<><u>F</u>ile</>, 25], [<><u>E</u>dit</>, 27], [<><u>V</u>iew</>, 30], [<><u>L</u>ayout</>, 37], [<><u>A</u>rrange</>, 42],
  [<>Effe<u>c</u>ts</>, 36], [<><u>B</u>itmaps</>, 42], [<>Te<u>x</u>t</>, 28], [<><u>T</u>able</>, 33], [<>T<u>o</u>ols</>, 32],
  [<><u>W</u>indow</>, 43], [<><u>H</u>elp</>, 30],
];

const handleSpots = [[-8, -8], [39, -8], [86, -8], [-8, 39], [86, 39], [-8, 85], [39, 85], [86, 85]];

export default function App() {
  return (
    <Screen>
      <GlobalStyle />
      <Taskbar>
        <Wallpaper width="560" height="27" viewBox="0 0 560 27">
          <defs>
            <filter id="water" x="0" y="0" width="100%" height="100%">
              <feTurbulence type="fractalNoise" baseFrequency="0.035 0.11" numOctaves="3" seed="8" />
              <feColorMatrix values="0 0 0 0 0.75  0 0 0 0 0.9  0 0 0 0 0.9  1.1 0 0 0 -0.45" />
            </filter>
            <linearGradient id="fade" x1="0" x2="1" y1="0" y2="0">
              <stop offset="0" stopColor="#20a9b4" /><stop offset=".06" stopColor="#49a8ad" /><stop offset="1" stopColor="#32a0ac" />
            </linearGradient>
          </defs>
          <rect width="560" height="27" fill="url(#fade)" />
          <path d="M30 27 75 0M50 27 100 0" stroke="#8d9a8c" strokeWidth="3" opacity=".5" />
          <rect width="560" height="27" filter="url(#water)" />
        </Wallpaper>
        <Slot $w={8} />
        <Slot $w={17}>{Taskicons.windows}</Slot>
        <Grip $m="0 0 0 10px" />
        <BarText $size={8} $m="0 0 0 3px" $w={19}>Links</BarText>
        <Slot $w={18}>{Taskicons.att}</Slot>
        <BarText $size={7.6} $m="-5px 0 0 -1px" $w={143}>green58@att.net - att.net Mail (3)</BarText>
        <Grip $m="0 1px 0 0" />
        <Slot $w={44}>{Taskicons.ie}</Slot>
        <Slot $w={41}>{Taskicons.numbers}</Slot>
        <Slot $w={41}>{Taskicons.word}</Slot>
        <Slot $w={41}>{Taskicons.film}</Slot>
        <Slot $w={42}>{Taskicons.rainbow}</Slot>
        <Slot $w={41}>{Taskicons.printer}</Slot>
        <Slot $w={42}>{Taskicons.snagit}</Slot>
        <Slot $w={41}>{Taskicons.fan}</Slot>
        <Slot $w={41}>{Taskicons.chrome}</Slot>
        <Slot $w={43}><CorelPen s={22} c="#7faf3a" /></Slot>
        <ActiveSlot $w={40} $strong><CorelPen s={22} c="#7faf3a" /></ActiveSlot>
        <ActiveSlot $w={41}>{Taskicons.page}</ActiveSlot>
        <Slot $w={47} />
        <Grip $m="0" />
        <BarText $size={8} $weight={600} $m="0 0 0 1px" $w={28}>Address</BarText>
        <AddressBox>
          <AddressBtn>⌄</AddressBtn>
          <AddressBtn $line>↻</AddressBtn>
        </AddressBox>
        <BarText $size={7} $m="0 0 0 5px">▾</BarText>
        <Slot $w={9} />
        <Slot $w={15}><TrayIcon kind="people" /></Slot>
        <Slot $w={16}><TrayIcon kind="check" /></Slot>
        <Slot $w={16}><TrayIcon kind="net" /></Slot>
        <Slot $w={16}><TrayIcon kind="sound" /></Slot>
        <Clock>1:50 PM<br />1/29/2017</Clock>
      </Taskbar>

      <TitleBar>
        <TitleLogo>
          <Svg s={11}>
            <path d="M0 0H16V16H0Z" fill="#8fb53c" />
            <path d="M3 1 5 2 14 13 11 15 7 12Z" fill="#f0f4dc" />
          </Svg>
        </TitleLogo>
        CorelDRAW X6 (64-Bit) - [Untitled-1]
        <WinButtons>
          <WinBtn $w={15}><Svg s={8} vb="0 0 8 8"><path d="M1 6h6" stroke="#123" strokeWidth="1.200" /></Svg></WinBtn>
          <WinBtn $w={16}><Svg s={8} vb="0 0 8 8"><path d="M.5 2.500h5v5h-5ZM2.500 2V.5h5v5H6" fill="none" stroke="#123" /></Svg></WinBtn>
          <WinBtn $w={30} $ml={2} $bg="#c75050"><Svg s={8} vb="0 0 8 8"><path d="M1.500 1.500l5 5M6.500 1.500l-5 5" stroke="#fff" strokeWidth="1.200" /></Svg></WinBtn>
        </WinButtons>
      </TitleBar>

      <MenuBar>
        <Slot $w={21} $h={12} $justify="flex-start" $mt={1}>
          <Svg s={9}><path d="M0 0H16V16H0Z" fill="#8fb53c" /><path d="M3 1 5 2 14 13 11 15 7 12Z" fill="#f0f4dc" /></Svg>
        </Slot>
        {menus.map(([label, w], i) => <MenuItem key={i} $w={w}>{label}</MenuItem>)}
        <MenuTail>
          <span>–</span><span>◱</span><span>x</span>
        </MenuTail>
      </MenuBar>

      <Toolbar>
        <Tool $w={18}><Glyph name="newDoc" s={12} /></Tool>
        <Tool><Glyph name="open" s={12} /></Tool>
        <Tool $w={18}><Glyph name="save" s={12} /></Tool>
        <Tool><Glyph name="print" s={12} /></Tool>
        <Sep $m={3} />
        <Tool $w={16}><Glyph name="cut" s={13} /></Tool>
        <Tool $w={19}><Glyph name="copy" s={12} /></Tool>
        <Tool $w={15}><Glyph name="paste" s={12} /></Tool>
        <Sep $m={4} />
        <Tool $w={14}><Glyph name="undo" s={12} /></Tool>
        <Drop $w={11}>▪</Drop>
        <Tool $w={17}><Glyph name="redo" s={12} /></Tool>
        <Drop $w={10}>▪</Drop>
        <Sep $m={3} />
        <Tool $w={16}><Glyph name="connect" s={12} /></Tool>
        <Sep $m={3} />
        <Tool $w={16}><Glyph name="imp" s={12} /></Tool>
        <Tool $w={17}><Glyph name="exp" s={12} /></Tool>
        <Sep $m={4} />
        <Tool $w={14}><Glyph name="publish" s={12} /></Tool>
        <Drop $w={12}>▾</Drop>
        <Tool $w={16}><Glyph name="pdf" s={11} /></Tool>
        <Sep $m={5} />
        <ZoomBox>132%<span>⌄</span></ZoomBox>
        <Sep $m={6} />
        <ToolText $w={31}>Snap to</ToolText>
        <Drop $w={10}>▾</Drop>
        <Tool $w={14}><Glyph name="options" s={11} /></Tool>
      </Toolbar>

      <PropertyBar>
        <Tool $w={17}><Glyph name="gridDots" s={11} /></Tool>
        <LabelStack $w={12} $align="flex-start"><span>x:</span><span>y:</span></LabelStack>
        <FieldStack $w={50}><Field>22.226 "</Field><Field>-4.0 "</Field></FieldStack>
        <LabelStack $w={14}>
          <Glyph name="widthArrow" s={9} />
          <ArrowGap />
          <Glyph name="heightArrow" s={9} />
        </LabelStack>
        <FieldStack $w={50}><Field>1.0 "</Field><Field>1.0 "</Field></FieldStack>
        <FieldStack $w={30} $ml={3}><Field>100.0</Field><Field>100.0</Field></FieldStack>
        <LabelStack $w={9}><span>%</span><span>%</span></LabelStack>
        <Tool $w={16}><Glyph name="lock" s={7} /></Tool>
        <Sep $m={3} />
        <Tool $w={11}><Glyph name="rotate" s={10} /></Tool>
        <Field $w={29} $h={12}>0.0</Field>
        <Drop $w={12}>°</Drop>
        <Sep $m={4} />
        <Tool $w={17}><Glyph name="flipH" s={11} /></Tool>
        <Tool $w={16}><Glyph name="flipV" s={11} /></Tool>
        <Sep $m={4} />
        <Tool $w={15}><Glyph name="order" s={12} /></Tool>
        <Sep $m={3} />
        <Tool $w={15}><Glyph name="combine" s={11} /></Tool>
        <Tool $w={18}><Glyph name="breakApart" s={11} /></Tool>
        <Sep $m={3} />
        <Tool $w={15}><Glyph name="editOk" s={12} /></Tool>
      </PropertyBar>

      <Main>
        <Toolbox>
          {BoxGlyphs.map((g, i) => (
            <BoxTool key={i} $active={i === 0}>
              <Svg s={13}>{g}</Svg>
            </BoxTool>
          ))}
        </Toolbox>

        <Center>
          <HorizontalRuler />
          <WorkRow>
            <VerticalRuler />
            <Canvas>
              {[0, 1, 2, 3, 4].map((i) => (
                <Disc key={i}>
                  {i === 0 && handleSpots.map(([x, y]) => <Handle key={`${x}${y}`} $x={x} $y={y} />)}
                  {i === 0 && <CenterMark>×</CenterMark>}
                </Disc>
              ))}
            </Canvas>
            <VScroll>
              <span>^</span>
              <VThumb />
              <span>⌄</span>
            </VScroll>
          </WorkRow>
          <StripRow>
            <PageTab>Finish Editing Object</PageTab>
            <Chevron $w={10} $c="#ccc">⋮</Chevron>
            <Chevron $w={6}>‹</Chevron>
            <HTrack><HThumb /></HTrack>
            <Chevron $w={8}>›</Chevron>
            <Tool $w={10}><Glyph name="magnifier" s={9} /></Tool>
          </StripRow>
          <SwatchRow>
            <Chevron $w={6} $c="#bbb">⋮</Chevron>
            <PlayDot>▶</PlayDot>
            <Tool $w={14}><Glyph name="dropper" s={8} /></Tool>
            <Slot $w={10} $h={12}><NoneBox w={10} h={12} /></Slot>
            <Swatch $c="#ed1c24" />
            <Swatch $c="#231f20" />
          </SwatchRow>
        </Center>

        <Docker>
          <DockHead>
            Symbol Manager
            <DockChevrons>»</DockChevrons>
            <DockBtn>–</DockBtn>
            <DockBtn $close>×</DockBtn>
          </DockHead>
          <DockLabel>Symbol Preview:</DockLabel>
          <PreviewRow>
            <PreviewBox><PreviewDisc /></PreviewBox>
            <MetaColumn>
              Symbol3<br />Symbol<br />5 instances<br />Local<br />Unnested
              <MetaButtons>
                <MetaBtn><Glyph name="breakApart" s={10} /></MetaBtn>
                <MetaBtn><Glyph name="breakApart" s={10} /></MetaBtn>
              </MetaButtons>
            </MetaColumn>
          </PreviewRow>
          <TreeBox>
            <TreeLines />
            <TreeRow $pad={14}>
              <Glyph name="house" s={12} />
              <TreeName $sel>Untitled-1</TreeName>
            </TreeRow>
            <TreeRow $pad={4}>
              <TreePlus />
              <Glyph name="folderSym" s={12} />
              <TreeName>Local Symbols</TreeName>
            </TreeRow>
            <TreeRow $pad={14}>
              <Glyph name="folderSym" s={12} />
              <TreeName>Network Symbols</TreeName>
            </TreeRow>
          </TreeBox>
          <ListBox>
            <ListGrid $h={11}>
              <ListHeadCell />
              <ListHeadCell $pad={3}>Name</ListHeadCell>
              <ListHeadCell $pad={4}>Type</ListHeadCell>
              <ListHeadCell $pad={3}>Description</ListHeadCell>
            </ListGrid>
            <ListGrid $h={21}>
              <ThumbCell><Glyph name="pencil" s={10} /></ThumbCell>
              <ListCell>Symbol1</ListCell>
              <ListCell>Symbol</ListCell>
              <ListCell />
            </ListGrid>
            <ListGrid $h={20} $sel>
              <ThumbCell><Glyph name="pencil" s={10} /><Thumb /></ThumbCell>
              <ListCell $sel>Symbol3</ListCell>
              <ListCell $sel>Symbol</ListCell>
              <ListCell $sel />
            </ListGrid>
            <Pointer width="10" height="14" viewBox="0 0 10 14">
              <path d="M1 1V11L3.500 8.800 5.500 13 7 12.300 5 8H8Z" fill="#fff" stroke="#667" strokeWidth=".8" />
            </Pointer>
            <ListScroll>
              <Chevron $w={11}>‹</Chevron>
              <ListThumb />
              <Chevron $w={11}>›</Chevron>
            </ListScroll>
          </ListBox>
          <DockFoot>
            <FootBtn><Glyph name="house" s={11} /></FootBtn>
            <FootBtn><Glyph name="editOk" s={11} /></FootBtn>
            <FootBtn><Glyph name="breakApart" s={11} /></FootBtn>
            <FootBtn $on $ml={81}><Glyph name="fit" s={11} /></FootBtn>
            <FootBtn $ml={2}><Glyph name="wand" s={11} /></FootBtn>
          </DockFoot>
        </Docker>

        <Palette>
          <PaletteTop>
            <PaletteTick $h={7}>⋮</PaletteTick>
            <PaletteTick $h={11}><PlayDot>▶</PlayDot></PaletteTick>
            <PaletteTick $h={12}><Glyph name="dropper" s={8} /></PaletteTick>
            <PaletteTick $h={11}>⌃</PaletteTick>
          </PaletteTop>
          <NoneBox w={11} h={12} />
          <Chip $c="#222" $h={11} />
          {paletteColors.map((c, i) => <Chip key={i} $c={c} />)}
          <PaletteFoot>⌄</PaletteFoot>
          <PaletteFoot>◂</PaletteFoot>
        </Palette>
      </Main>

      <StatusBar>
        <StatusCell $pad={3}>
          ( 32.426, -3.732 )
          <StatusArrow $ml={18}>▶</StatusArrow>
        </StatusCell>
        <StatusCell>Symbol on Symbol Contents</StatusCell>
        <StatusCell $pad={1}><Glyph name="statusPrinter" s={9} /></StatusCell>
        <StatusCell $pad={2} $gap={2}>
          <Glyph name="bucket" s={11} />
          <NoneBox w={11} h={11} stroke="#666" />
          <StateName>None</StateName>
        </StatusCell>
        <StatusCell $col="5" $row="1 / span 2"><Glyph name="stamp" s={13} /></StatusCell>
        <StatusCell $col="1 / span 3" $row="2" $pad={3}>
          Document color profiles: RGB: sRGB IEC61966-2.1; CMYK: U.S. Web Coated (SWOP) v2; Grayscale: Dot Gain 20%
          <StatusArrow $ml={3}>▶</StatusArrow>
        </StatusCell>
        <StatusCell $col="4" $row="2" $pad={2} $gap={2}>
          <Glyph name="nib" s={11} />
          <NoneBox w={11} h={11} stroke="#666" />
          <StateName>Outline Color</StateName>
        </StatusCell>
      </StatusBar>
    </Screen>
  );
}
